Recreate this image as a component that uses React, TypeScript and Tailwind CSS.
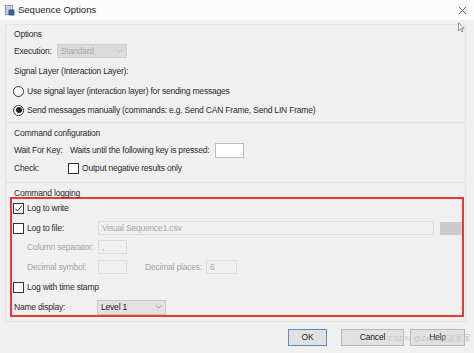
import React from "react";

const font = { fontFamily: '"Liberation Sans", Arial, "Noto Sans CJK SC", sans-serif' };

const Check = ({ checked = false }: { checked?: boolean }) => (
  <div className="w-[11px] h-[11px] border border-[#333] bg-white flex items-center justify-center shrink-0">
    {checked && (
      <svg viewBox="0 0 10 10" className="w-[9px] h-[9px]">
        <path d="M1.5 5.2 L4 7.8 L8.7 1.8" fill="none" stroke="#222" strokeWidth="1.1" />
      </svg>
    )}
  </div>
);

const Radio = ({ on = false }: { on?: boolean }) => (
  <div className="w-[11px] h-[11px] rounded-full border border-[#333] bg-white flex items-center justify-center shrink-0">
    {on && <div className="w-[6px] h-[6px] rounded-full bg-[#222]" />}
  </div>
);

const Box = ({ className, children }: { className?: string; children?: React.ReactNode }) => (
  <div
    className={
      "h-[14px] shrink-0 border border-[#dcdcdc] bg-[#f0f0f0] text-[#a8a8a8] flex items-center px-[3px] " +
      (className ?? "")
    }
  >
    {children}
  </div>
);

const Chevron = ({ color = "#888" }: { color?: string }) => (
  <svg viewBox="0 0 8 5" className="w-[7px] h-[4px]">
    <path d="M0.5 0.5 L4 4 L7.5 0.5" fill="none" stroke={color} strokeWidth="0.9" />
  </svg>
);

export default function App() {
  return (
    <div
      className="relative w-[474px] h-[353px] bg-[#f0f0f0] text-[#2b2b2b] text-[8.5px] tracking-[-0.2px] whitespace-nowrap overflow-hidden"
      style={font}
    >
      {/* title bar */}
      <div className="h-[20px] bg-[#fcfcfc] flex items-center pl-[5px] pr-[7px]">
        <svg viewBox="0 0 10 11" className="w-[10px] h-[11px]">
          <rect x="0.5" y="0.5" width="7" height="9" fill="#c9d1db" stroke="#7a8796" strokeWidth="0.8" />
          <rect x="3.5" y="4.5" width="6" height="6" rx="1" fill="#2f5f9e" />
        </svg>
        <span className="ml-[3px] text-[9.5px] tracking-normal text-[#1c1c1c]">Sequence Options</span>
        <svg viewBox="0 0 10 10" className="ml-auto w-[9px] h-[9px]">
          <path d="M1 1 L9 9 M9 1 L1 9" stroke="#444" strokeWidth="0.9" />
        </svg>
      </div>

      {/* main frame */}
      <div className="mt-[4px] ml-[5px] w-[461px] border border-[#e4e4e4] bg-[#f1f0f1]">
        {/* Options */}
        <div className="pl-[8px]">
          <div className="h-[19px] flex items-center">Options</div>
          <div className="h-[14px] flex items-center">
            <span className="w-[43px]">Execution:</span>
            <div className="w-[70px] h-[14px] bg-[#dadada] border border-[#d0d0d0] flex items-center justify-between px-[3px] text-[#a9a9a9]">
              <span>Standard</span>
              <Chevron color="#b5b5b5" />
            </div>
          </div>
          <div className="mt-[5px] h-[16px] flex items-center">Signal Layer (Interaction Layer):</div>
          <div className="mt-[4px] h-[16px] flex items-center gap-[3px] -ml-[1px]">
            <Radio />
            <span>Use signal layer (interaction layer) for sending messages</span>
          </div>
          <div className="mt-[3px] h-[16px] flex items-center gap-[3px] -ml-[1px]">
            <Radio on />
            <span>Send messages manually (commands: e.g. Send CAN Frame, Send LIN Frame)</span>
          </div>
        </div>

        {/* Command configuration */}
        <div className="mt-[4px] border-t border-[#e2e2e2] pl-[8px]">
          <div className="h-[20px] flex items-center">Command configuration</div>
          <div className="h-[14px] flex items-center">
            <span className="w-[56px]">Wait For Key:</span>
            <span>Waits until the following key is pressed:</span>
            <div className="ml-[6px] w-[29px] h-[15px] bg-white border border-[#bdbdbd]" />
          </div>
          <div className="mt-[3px] h-[16px] flex items-center">
            <span className="w-[54px]">Check:</span>
            <Check />
            <span className="ml-[3px]">Output negative results only</span>
          </div>
        </div>

        {/* Command logging */}
        <div className="mt-[6px] border-t border-[#e2e2e2]">
          <div className="h-[14px] pl-[8px] leading-[20px]">Command logging</div>
          <div className="ml-[4px] mr-[1px] mb-[4px] border-2 border-[#e8393a]">
            <div className="mt-[1px] h-[16px] flex items-center gap-[3px] pl-[1px]">
              <Check checked />
              <span>Log to write</span>
            </div>
            <div className="mt-[4px] h-[16px] flex items-center pl-[1px]">
              <Check />
              <span className="ml-[3px] w-[71px]">Log to file:</span>
              <Box className="w-[336px]">Visual Sequence1.csv</Box>
              <div className="ml-[6px] w-[22px] h-[13px] bg-[#cbcbcb]" />
            </div>
            <div className="mt-[3px] h-[16px] flex items-center pl-[15px] text-[#a3a3a3]">
              <span className="w-[71px]">Column separator:</span>
              <Box className="w-[29px]">,</Box>
            </div>
            <div className="mt-[4px] h-[16px] flex items-center pl-[15px] text-[#a3a3a3]">
              <span className="w-[71px]">Decimal symbol:</span>
              <Box className="w-[29px]" />
              <span className="ml-[18px] w-[61px]">Decimal places:</span>
              <Box className="w-[31px]">6</Box>
            </div>
            <div className="mt-[4px] h-[16px] flex items-center gap-[3px] pl-[1px]">
              <Check />
              <span>Log with time stamp</span>
            </div>
            <div className="mt-[4px] h-[16px] flex items-center pl-[2px]">
              <span className="w-[83px]">Name display:</span>
              <div className="w-[69px] h-[15px] bg-[#e1e1e1] border border-[#c8c8c8] flex items-center justify-between px-[3px] text-[#222]">
                <span>Level 1</span>
                <Chevron color="#777" />
              </div>
            </div>
          </div>
        </div>
      </div>

      {/* buttons */}
      <div className="mt-[7px] flex justify-end pr-[9px] gap-[6px]">
        <button className="w-[39px] h-[17px] bg-[#e1e1e1] border border-[#4f8fd0] text-[8.5px] text-[#222]">OK</button>
        <button className="ml-[8px] w-[63px] h-[17px] bg-[#e1e1e1] border border-[#b8b8b8] text-[8.5px] text-[#222]">Cancel</button>
        <button className="w-[55px] h-[17px] bg-[#e1e1e1] border border-[#b8b8b8] text-[8.5px] text-[#222]">Help</button>
      </div>

      {/* watermark */}
      <div className="absolute left-[388px] top-[333px] text-[8px] tracking-normal text-[#c4c4c4]">
        CSDN @Zeyu淡淡家家
      </div>

      {/* cursor */}
      <svg viewBox="0 0 8 12" className="absolute left-[458px] top-[22px] w-[7px] h-[11px]">
        <path d="M0.6 0.6 L0.6 9.5 L2.8 7.5 L4.3 11 L5.6 10.4 L4.2 7 L7 7 Z" fill="#fff" stroke="#555" strokeWidth="0.7" />
      </svg>
    </div>
  );
}
